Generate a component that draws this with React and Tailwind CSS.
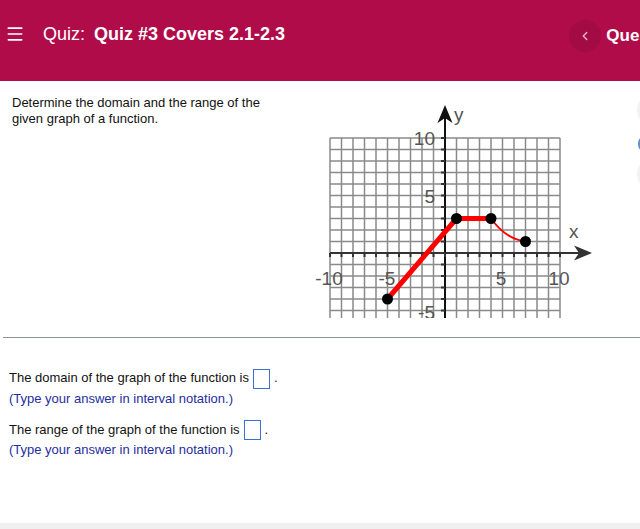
import { Menu, ChevronLeft } from 'lucide-react';

const Graph = () => {
    const u = 11.5;
    const ox = 445;
    const oy = 251;
    const px = (x) => ox + x * u;
    const py = (y) => oy - y * u;
    const vLines = Array.from({ length: 21 }, (_, i) => 330 + i * u);
    const hLines = Array.from({ length: 18 }, (_, j) => 136 + j * u);
    const ticks = Array.from({ length: 21 }, (_, i) => i - 10);

    return (
        <svg width="300" height="220" viewBox="300 96 300 220" className="block shrink-0 mt-[3px]">
            {/* grid */}
            {vLines.map((x) => (
                <line key={'v' + x} x1={x} y1="136" x2={x} y2="330" stroke="#8a8a8a" strokeWidth="1.5" />
            ))}
            {hLines.map((y) => (
                <line key={'h' + y} x1="330" y1={y} x2="560" y2={y} stroke="#8a8a8a" strokeWidth="1.5" />
            ))}

            {/* axes */}
            <line x1="330" y1={oy} x2="582" y2={oy} stroke="#333" strokeWidth="2" />
            <line x1={ox} y1="330" x2={ox} y2="112" stroke="#111" strokeWidth="2" />
            <polygon points={`592,${oy} 574,${oy - 7.5} 579,${oy} 574,${oy + 7.5}`} fill="#333" />
            <polygon points={`${ox},103 ${ox - 7.5},121 ${ox},116 ${ox + 7.5},121`} fill="#111" />
            {ticks.map((t) => (
                <line key={'tx' + t} x1={px(t)} y1={oy} x2={px(t)} y2={oy + 4} stroke="#333" strokeWidth="2" />
            ))}
            {ticks.slice(5).map((t) => (
                <line key={'ty' + t} x1={ox - 4} y1={py(t)} x2={ox} y2={py(t)} stroke="#333" strokeWidth="2" />
            ))}

            {/* labels */}
            <g fill="#555" fontSize="19" fontFamily="'Liberation Sans', Arial, sans-serif">
                <text x="435" y="143" textAnchor="end">10</text>
                <text x="435" y="201" textAnchor="end">5</text>
                <text x="435" y="317" textAnchor="end">-5</text>
                <text x="329" y="283" textAnchor="middle">-10</text>
                <text x="387" y="283" textAnchor="middle">-5</text>
                <text x="501" y="283" textAnchor="middle">5</text>
                <text x="559" y="283" textAnchor="middle">10</text>
                <text x="454" y="119">y</text>
                <text x="569" y="236">x</text>
            </g>

            {/* function */}
            <polyline
                points={`${px(-5)},${py(-4)} ${px(1)},${py(3)} ${px(4)},${py(3)}`}
                fill="none"
                stroke="#ff0000"
                strokeWidth="5"
            />
            <path d={`M${px(4)},${py(3)} Q${px(5.3)},${py(1.2)} ${px(7)},${py(1)}`} fill="none" stroke="#ff0000" strokeWidth="1.8" />
            {[[-5, -4], [1, 3], [4, 3], [7, 1]].map(([x, y]) => (
                <circle key={x} cx={px(x)} cy={py(y)} r="5.5" fill="#000" />
            ))}
        </svg>
    );
};

const AnswerBox = () => (
    <span className="inline-block w-[17px] h-[20px] border border-[#3b6fd6] align-middle mx-[4px] bg-white" />
);

export default function App() {
    return (
        <div className="w-[640px] h-[529px] overflow-hidden relative bg-white font-['Liberation_Sans',Arial,sans-serif] text-[#222]">
            {/* Header */}
            <header className="h-[81px] bg-[#b00c4a] flex items-start pt-[20px] text-white">
                <div className="w-[30px] flex justify-center pt-[4px]">
                    <Menu size={20} strokeWidth={2} />
                </div>
                <div className="ml-[13px] text-[18px] leading-[28px] whitespace-nowrap">
                    <span>Quiz:</span>
                    <span className="font-bold ml-[9px]">Quiz #3 Covers 2.1-2.3</span>
                </div>
                <div className="ml-auto flex items-center gap-[5px] mr-[-40px]">
                    <div className="w-[32px] h-[32px] rounded-full bg-[#a30b44] flex items-center justify-center">
                        <ChevronLeft size={14} strokeWidth={2.5} className="text-[#e8b3c6]" />
                    </div>
                    <span className="font-bold text-[17px] leading-[28px]">Question</span>
                </div>
            </header>

            {/* side floating buttons (clipped) */}
            <div className="absolute left-[638px] top-[96px] w-[30px] h-[28px] rounded-full bg-[#f2f2f2] shadow-[0_0_3px_rgba(0,0,0,0.12)]" />
            <div className="absolute left-[638px] top-[134px] w-[30px] h-[20px] rounded-full bg-[#5d8fc8]" />
            <div className="absolute left-[638px] top-[160px] w-[30px] h-[28px] rounded-full bg-[#f2f2f2] shadow-[0_0_3px_rgba(0,0,0,0.12)]" />

            {/* Question */}
            <section className="flex pt-[14px]">
                <p className="w-[300px] pl-[12px] pr-[10px] text-[13px] leading-[16px] text-[#111]">
                    Determine the domain and the range of the given graph of a function.
                </p>
                <Graph />
            </section>

            <div className="ml-[3px] mt-[19px] h-px bg-[#8c919c]" />

            {/* Answers */}
            <section className="pl-[9px] pt-[30px] text-[13px] leading-[19px]">
                <p className="text-[#111]">
                    The domain of the graph of the function is<AnswerBox />.
                </p>
                <p className="text-[#1f2e9e]">(Type your answer in interval notation.)</p>

                <p className="text-[#111] mt-[12px]">
                    The range of the graph of the function is<AnswerBox />.
                </p>
                <p className="text-[#1f2e9e]">(Type your answer in interval notation.)</p>
            </section>

            <div className="absolute left-0 right-0 bottom-0 h-[6px] bg-[#f0f0f0]" />
        </div>
    );
}
